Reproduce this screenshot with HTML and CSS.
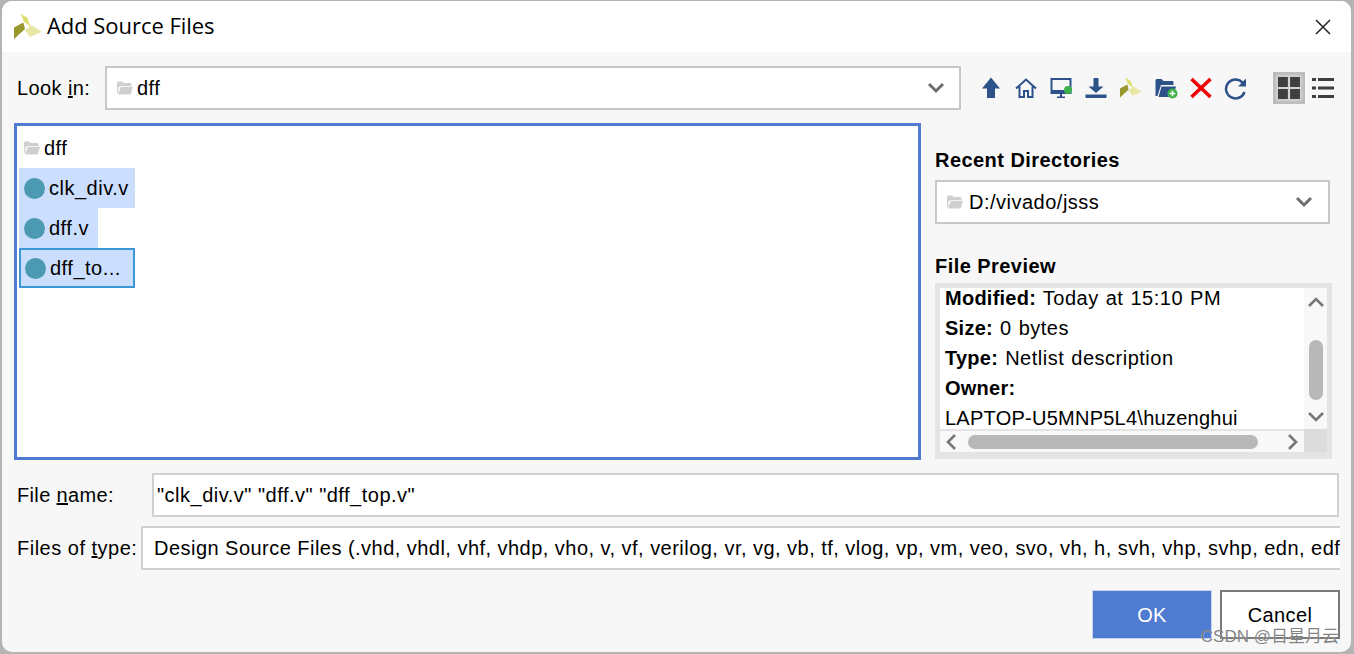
FILE: index.html
```html
<!DOCTYPE html>
<html lang="en">
<head>
<meta charset="utf-8">
<title>Add Source Files</title>
<link rel="stylesheet" href="styles.css">
</head>
<body>
<svg class="defs" width="0" height="0" aria-hidden="true">
  <defs>
    <symbol id="folder" viewBox="0 0 16 14">
      <path d="M0 2C0 1 .6.500 1.500.500h3.700l1.500 1.600h6.600c.7 0 1.200.5 1.200 1.200V5H4L1.300 6.200V12L0 12z" fill="#cfcfcf"/>
      <path d="M1 13.500l2.800-7.700H16L13.600 13.500z" fill="#cfcfcf"/>
    </symbol>
    <symbol id="logo" viewBox="0 0 28 28">
      <path d="M6.700.700L13.300 4.700 16.700 14 10 8.700z" fill="#dede6e"/>
      <path d="M11 17.300L17.700 12 27.700 18.700 16 24z" fill="#e8e8a6"/>
      <path d="M0 14.600L9.300 9.600 11 16 0 26z" fill="#98982c"/>
    </symbol>
  </defs>
</svg>
<main class="window">
  <header class="titlebar">
    <svg class="logo"><use href="#logo"/></svg>
    <h1 class="title">Add Source Files</h1>
    <svg class="close" viewBox="0 0 16 16"><path d="M1 1l14 14M15 1L1 15" stroke="#222" stroke-width="1.500" fill="none"/></svg>
  </header>
  <div class="body">
    <div class="lookrow">
      <label class="looklabel">Look <u>i</u>n:</label>
      <div class="combo lookcombo">
        <svg class="folder"><use href="#folder"/></svg>
        <span class="combotext">dff</span>
        <svg class="chev" viewBox="0 0 18 12"><path d="M2 2l7 7 7-7" stroke="#6e6e6e" stroke-width="3" fill="none"/></svg>
      </div>
      <div class="tools">
        <svg class="tool" viewBox="0 0 24 24"><path d="M12 1.500L21 12.500H16V22H8V12.500H3z" fill="#2d5289"/></svg>
        <svg class="tool" viewBox="0 0 24 24"><path d="M2 12.500L12 3.500l10 9M5.500 10.500V21H10v-6h4v6h4.500V10.500" stroke="#2d5289" stroke-width="2" fill="none"/></svg>
        <svg class="tool" viewBox="0 0 24 24"><path d="M1.500 2h21v16h-21zM3.500 4v10h17V4z" fill="#2d5289" fill-rule="evenodd"/><path d="M8 20.500h8V22H8zM11 18h2v3h-2z" fill="#2d5289"/><circle cx="19" cy="14" r="4" fill="#3fb04a"/></svg>
        <svg class="tool" viewBox="0 0 24 24"><path d="M9.500 2h5v8.500h5L12 17l-7.500-6.500h5zM1.500 18.500h21V22h-21z" fill="#2d5289"/></svg>
        <svg class="tool" viewBox="0 0 24 24"><use href="#logo" x="1" y="1" width="22" height="22"/></svg>
        <svg class="tool" viewBox="0 0 24 24"><path d="M1.500 4.500C1.500 3.500 2 3 3 3h4.500L9.500 5H18c1 0 1.500.6 1.500 1.500V9H7L3.500 20h-2zM7.500 10.500H22L19 21H4.500z" fill="#2d5289"/><circle cx="18.500" cy="17.500" r="5" fill="#3fb04a"/><path d="M15.700 17.500h5.600M18.500 14.700v5.600" stroke="#fff" stroke-width="1.600"/></svg>
        <svg class="tool" viewBox="0 0 24 24"><path d="M2.500 3l19 18M21.500 3l-19 18" stroke="#f00000" stroke-width="3.600" fill="none"/></svg>
        <svg class="tool" viewBox="0 0 24 24"><path d="M20.500 16A9.500 9.500 0 1 1 18.800 6.800" stroke="#2d5289" stroke-width="2.500" fill="none"/><path d="M22 2.500V10.500H14z" fill="#2d5289"/></svg>
        <span class="viewbtn active">
          <svg class="viewicon" viewBox="2 2 20 20"><path d="M2 2h9v9H2zM13 2h9v9h-9zM2 13h9v9H2zM13 13h9v9h-9z" fill="#3f3f3f"/></svg>
        </span>
        <span class="viewbtn">
          <svg class="viewicon" viewBox="1 1 22 22"><path d="M1 2h4v3H1zM7 2h16v3H7zM1 10.500h4v3H1zM7 10.500h16v3H7zM1 19h4v3H1zM7 19h16v3H7z" fill="#3f3f3f"/></svg>
        </span>
      </div>
    </div>

    <div class="middle">
      <section class="filelist">
        <div class="item dir">
          <svg class="folder"><use href="#folder"/></svg><span>dff</span>
        </div>
        <div class="item sel"><i class="dot"></i><span>clk_div.v</span></div>
        <div class="item sel narrow"><i class="dot"></i><span>dff.v</span></div>
        <div class="item sel focus"><i class="dot"></i><span>dff_to...</span></div>
      </section>
      <aside class="side">
        <h2 class="sidehead">Recent Directories</h2>
        <div class="combo recent">
          <svg class="folder"><use href="#folder"/></svg>
          <span class="combotext">D:/vivado/jsss</span>
          <svg class="chev" viewBox="0 0 18 12"><path d="M2 2l7 7 7-7" stroke="#6e6e6e" stroke-width="3" fill="none"/></svg>
        </div>
        <h2 class="sidehead preview-head">File Preview</h2>
        <div class="preview">
          <div class="previewgrid">
            <div class="previewtext">
              <p><b>Modified:</b> Today at 15:10 PM</p>
              <p><b>Size:</b> 0 bytes</p>
              <p><b>Type:</b> Netlist description</p>
              <p><b>Owner:</b></p>
              <p class="owner">LAPTOP-U5MNP5L4\huzenghui</p>
            </div>
            <div class="vscroll">
              <svg class="arrow" viewBox="0 0 18 12"><path d="M2 10l7-7 7 7" stroke="#777" stroke-width="2.600" fill="none"/></svg>
              <div class="vtrack"><div class="vthumb"></div></div>
              <svg class="arrow" viewBox="0 0 18 12"><path d="M2 2l7 7 7-7" stroke="#777" stroke-width="2.600" fill="none"/></svg>
            </div>
            <div class="hscroll">
              <svg class="harrow" viewBox="0 0 12 18"><path d="M10 2L3 9l7 7" stroke="#777" stroke-width="2.600" fill="none"/></svg>
              <div class="hthumb"></div>
              <svg class="harrow" viewBox="0 0 12 18"><path d="M2 2l7 7-7 7" stroke="#777" stroke-width="2.600" fill="none"/></svg>
            </div>
            <div class="corner"></div>
          </div>
        </div>
      </aside>
    </div>

    <div class="formrow namerow">
      <label class="formlabel namelabel">File <u>n</u>ame:</label>
      <div class="field namefield">"clk_div.v" "dff.v" "dff_top.v"</div>
    </div>
    <div class="formrow typerow">
      <label class="formlabel typelabel">Files of <u>t</u>ype:</label>
      <div class="field typefield">Design Source Files (.vhd, vhdl, vhf, vhdp, vho, v, vf, verilog, vr, vg, vb, tf, vlog, vp, vm, veo, svo, vh, h, svh, vhp, svhp, edn, edf</div>
    </div>
    <div class="buttons">
      <button class="btn ok">OK</button>
      <button class="btn cancel">Cancel</button>
    </div>
  </div>
  <div class="watermark">CSDN @日星月云</div>
</main>
</body>
</html>
```
FILE: styles.css
```css
* { box-sizing: border-box; }
html, body { margin: 0; height: 100%; }
body {
  width: 1354px;
  height: 654px;
  overflow: hidden;
  background: #b4b4b4;
  font-family: "Liberation Sans", Arial, sans-serif;
  font-size: 20px;
  letter-spacing: .5px;
  color: #000;
  padding-top: 1px;
}
.defs { position: absolute; }
.window {
  position: relative;
  width: 1349px;
  height: 651px;
  margin-left: 2px;
  background: #f7f7f7;
  border-radius: 10px;
  overflow: hidden;
}
.titlebar {
  height: 51px;
  background: #fff;
  display: flex;
  align-items: center;
  padding: 0 20px 0 12px;
}
.logo { width: 28px; height: 28px; margin-right: 5px; flex: none; }
.title {
  margin: 0 0 3px;
  flex: 1;
  font: 400 22px "Open Sans", sans-serif;
  letter-spacing: -.05px;
}
.close { width: 16px; height: 16px; flex: none; }
.body { padding: 14px 0 0 12px; }
.lookrow { display: flex; align-items: center; height: 44px; }
.looklabel { width: 91px; padding-left: 3px; flex: none; letter-spacing: .4px; }
.combo {
  display: flex;
  align-items: center;
  background: #fff;
  border: 2px solid #c8c8c8;
}
.lookcombo { width: 856px; height: 44px; padding: 0 14px 0 10px; flex: none; }
.folder { width: 16px; height: 14px; margin-right: 4px; flex: none; }
.combotext { flex: 1; }
.chev { width: 18px; height: 12px; flex: none; }
.tools { display: flex; align-items: center; margin-left: 18px; }
.tool { width: 24px; height: 24px; margin-right: 11px; flex: none; }
.viewbtn {
  width: 32px;
  height: 32px;
  display: flex;
  align-items: center;
  justify-content: center;
  margin-right: 2px;
  flex: none;
}
.viewbtn.active {
  margin-left: 14px;
  background: #d2d2d2;
  border: 1px solid #bdbdbd;
  box-shadow: inset 0 0 4px #a0a0a0;
}
.viewicon { width: 22px; height: 22px; }

.middle { display: flex; margin-top: 13px; height: 337px; }
.filelist {
  width: 907px;
  flex: none;
  background: #fff;
  border: 3px solid #4f7bd0;
  padding: 2px 0 0 2px;
}
.item {
  display: flex;
  align-items: center;
  height: 40px;
  width: 116px;
  padding-left: 5px;
}
.item.sel { background: #cbdefd; }
.item.narrow { width: 79px; }
.item.focus { border: 2px solid #3f97d6; padding-left: 4px; }
.item.dir { width: auto; }
.dot {
  width: 21px;
  height: 21px;
  border-radius: 50%;
  background: #4c99b2;
  margin-right: 4px;
  flex: none;
}
.side { margin-left: 14px; width: 395px; flex: none; }
.sidehead { margin: 0; font-size: 20px; font-weight: 700; letter-spacing: .45px; line-height: 23px; padding: 26px 0 0; }
.recent { width: 395px; height: 44px; margin-top: 8px; padding: 0 15px 0 10px; }
.recent .folder { margin-right: 6px; }
.preview-head { padding-top: 31px; }
.preview {
  margin-top: 5px;
  height: 176px;
  width: 397px;
  background: #e4e4e4;
  padding: 5px 5px 7px 5px;
}
.previewgrid {
  display: grid;
  grid-template-columns: 364px 1fr;
  grid-template-rows: 141px 23px;
  height: 100%;
}
.previewtext { background: #fff; overflow: hidden; padding-left: 5px; white-space: nowrap; word-spacing: 1px; }
.previewtext b { letter-spacing: .25px; }
.previewtext p { margin: 0; height: 30px; line-height: 30px; }
.previewtext p:first-child { height: 25px; line-height: 20px; }
.previewtext .owner { letter-spacing: .25px; }
.vscroll {
  background: #f8f8f8;
  display: flex;
  flex-direction: column;
  align-items: center;
  justify-content: space-between;
  padding: 8px 0 6px;
}
.vtrack { flex: 1; display: flex; justify-content: center; align-items: center; }
.vthumb { width: 14px; height: 60px; border-radius: 7px; background: #b8b8b8; margin-top: 20px; }
.arrow { width: 18px; height: 12px; }
.hscroll { background: #f8f8f8; display: flex; align-items: center; padding: 0 5px 0 5px; margin-top: 2px; }
.hthumb { width: 290px; height: 14px; border-radius: 7px; background: #b8b8b8; margin: 0 auto 0 11px; }
.harrow { width: 12px; height: 18px; flex: none; }
.corner { background: #dcdcdc; }

.formrow { display: flex; align-items: center; }
.namerow { margin-top: 13px; height: 44px; }
.typerow { margin-top: 9px; height: 44px; }
.formlabel { padding-left: 3px; flex: none; letter-spacing: .35px; }
.namelabel { width: 138px; }
.typelabel { width: 127px; letter-spacing: .5px; }
.field {
  height: 44px;
  line-height: 40px;
  background: #fff;
  border: 2px solid #d0d0d0;
  white-space: nowrap;
  overflow: hidden;
}
.namefield { width: 1187px; padding-left: 3px; }
.typefield { width: 1199px; padding-left: 11px; border-right: 0; letter-spacing: .47px; }
.buttons { display: flex; justify-content: flex-end; gap: 8px; margin-top: 20px; padding-right: 11px; }
.btn {
  width: 120px;
  height: 49px;
  font: 20px "Liberation Sans", Arial, sans-serif;
  letter-spacing: .4px;
  padding-top: 3px;
}
.ok { background: #4f7bd0; color: #fff; border: 1px solid #c4d4f0; }
.cancel { background: #fff; color: #000; border: 2px solid #7a7a7a; }
.watermark {
  position: absolute;
  right: 12px;
  bottom: 5px;
  font: 17px "Liberation Sans", "Noto Sans CJK SC", sans-serif;
  letter-spacing: 0;
  color: rgba(90, 90, 90, .75);
  text-shadow: 0 0 1px rgba(255, 255, 255, .8);
}
```
